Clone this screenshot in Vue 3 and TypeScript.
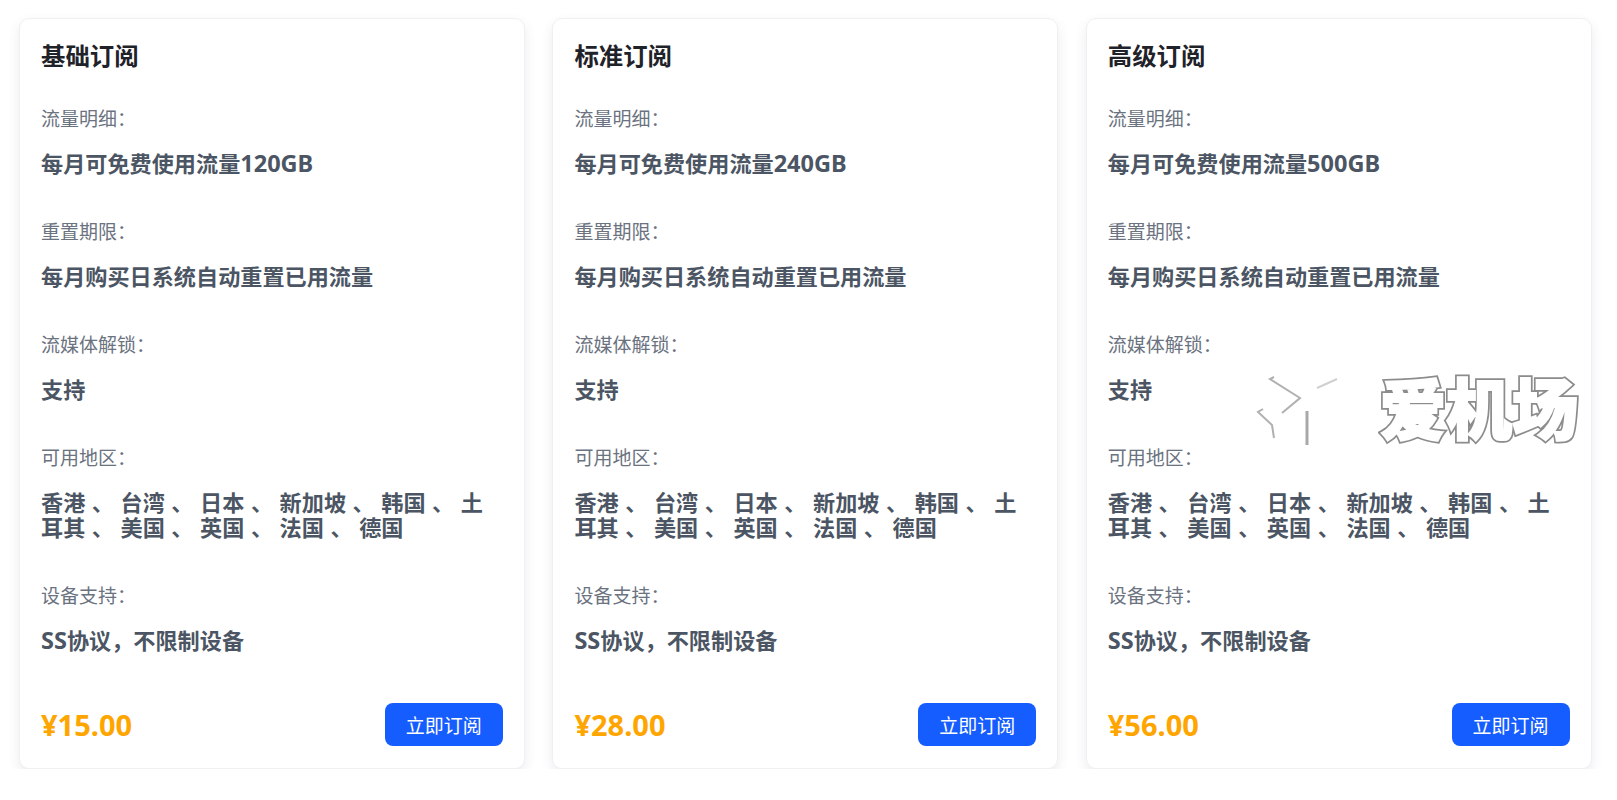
<script setup lang="ts">
interface Plan {
  name: string
  amount: string
  price: string
}

const plans: Plan[] = [
  { name: '基础订阅', amount: '120GB', price: '¥15.00' },
  { name: '标准订阅', amount: '240GB', price: '¥28.00' },
  { name: '高级订阅', amount: '500GB', price: '¥56.00' },
]

const regions = '香港 、 台湾 、 日本 、 新加坡 、 韩国 、 土耳其 、 美国 、 英国 、 法国 、 德国'
</script>

<template>
  <div class="page">
    <div v-for="plan in plans" :key="plan.name" class="card">
      <h3 class="title">{{ plan.name }}</h3>
      <div class="item">
        <div class="label">流量明细：</div>
        <div class="value">每月可免费使用流量<span class="latin">{{ plan.amount }}</span></div>
      </div>
      <div class="item">
        <div class="label">重置期限：</div>
        <div class="value">每月购买日系统自动重置已用流量</div>
      </div>
      <div class="item">
        <div class="label">流媒体解锁：</div>
        <div class="value">支持</div>
      </div>
      <div class="item">
        <div class="label">可用地区：</div>
        <div class="value regions">{{ regions }}</div>
      </div>
      <div class="item">
        <div class="label">设备支持：</div>
        <div class="value"><span class="latin">SS</span>协议，不限制设备</div>
      </div>
      <div class="footer">
        <span class="price">{{ plan.price }}</span>
        <button class="buy">立即订阅</button>
      </div>
    </div>

    <div class="watermark">
      <svg class="mark-lines" width="90" height="72" viewBox="0 0 90 72" fill="none" stroke="#b0b0b0" stroke-width="2">
        <path d="M19 2 L15 4 L45 23 L27 38" />
        <path d="M62 13 L82 4" stroke="#d0d0d0" />
        <path d="M8 34 L3 37 L17 50 L19 63" />
        <path d="M52 36 L52 70" stroke="#a8a8a8" stroke-width="3" />
      </svg>
      <span class="mark-text">爱机场</span>
    </div>
  </div>
</template>

<style scoped>
.page {
  position: relative;
  display: grid;
  grid-template-columns: repeat(3, 505.8px);
  gap: 27.6px;
  padding: 18px 25px 0 19px;
  font-family: "Noto Sans", "Noto Sans CJK SC", sans-serif;
}
.card {
  box-sizing: border-box;
  height: 751px;
  padding: 21px 21px 0;
  background: #fff;
  border: 1px solid #eef0f2;
  border-radius: 10px;
  box-shadow: 0 5px 12px rgba(60, 70, 100, 0.1);
  display: flex;
  flex-direction: column;
}
.title {
  margin: 0 0 34px;
  font-size: 24.4px;
  line-height: 32px;
  font-weight: 700;
  color: #1f2329;
}
.item {
  margin-bottom: 43px;
}
.label {
  font-size: 19px;
  line-height: 26px;
  color: #6b7280;
}
.value {
  margin-top: 19px;
  font-size: 22.15px;
  line-height: 25px;
  font-weight: 700;
  color: #4b5563;
}
.regions {
  word-spacing: 0.8px;
}
.latin {
  font-size: 23.5px;
}
.footer {
  margin-top: auto;
  margin-bottom: 22px;
  display: flex;
  align-items: center;
  justify-content: space-between;
}
.price {
  font-size: 29px;
  font-weight: 700;
  color: #ffa500;
}
.buy {
  width: 118px;
  height: 43px;
  border: 0;
  border-radius: 8px;
  background: #165dff;
  color: #fff;
  font-family: inherit;
  font-size: 19px;
}
.watermark {
  position: absolute;
  left: 1255px;
  top: 375px;
  display: flex;
  align-items: flex-start;
  gap: 35px;
  pointer-events: none;
}
.mark-lines {
  filter: blur(0.4px);
}
.mark-text {
  position: relative;
  isolation: isolate;
  font-size: 66px;
  line-height: 66px;
  font-weight: 900;
  color: #fff;
  -webkit-text-stroke: 2px #fff;
  filter: blur(0.5px);
}
.mark-text::before {
  content: "爱机场";
  position: absolute;
  left: 0;
  top: 0;
  z-index: -1;
  color: #8c8c8c;
  -webkit-text-stroke: 5.5px #8c8c8c;
}
</style>
